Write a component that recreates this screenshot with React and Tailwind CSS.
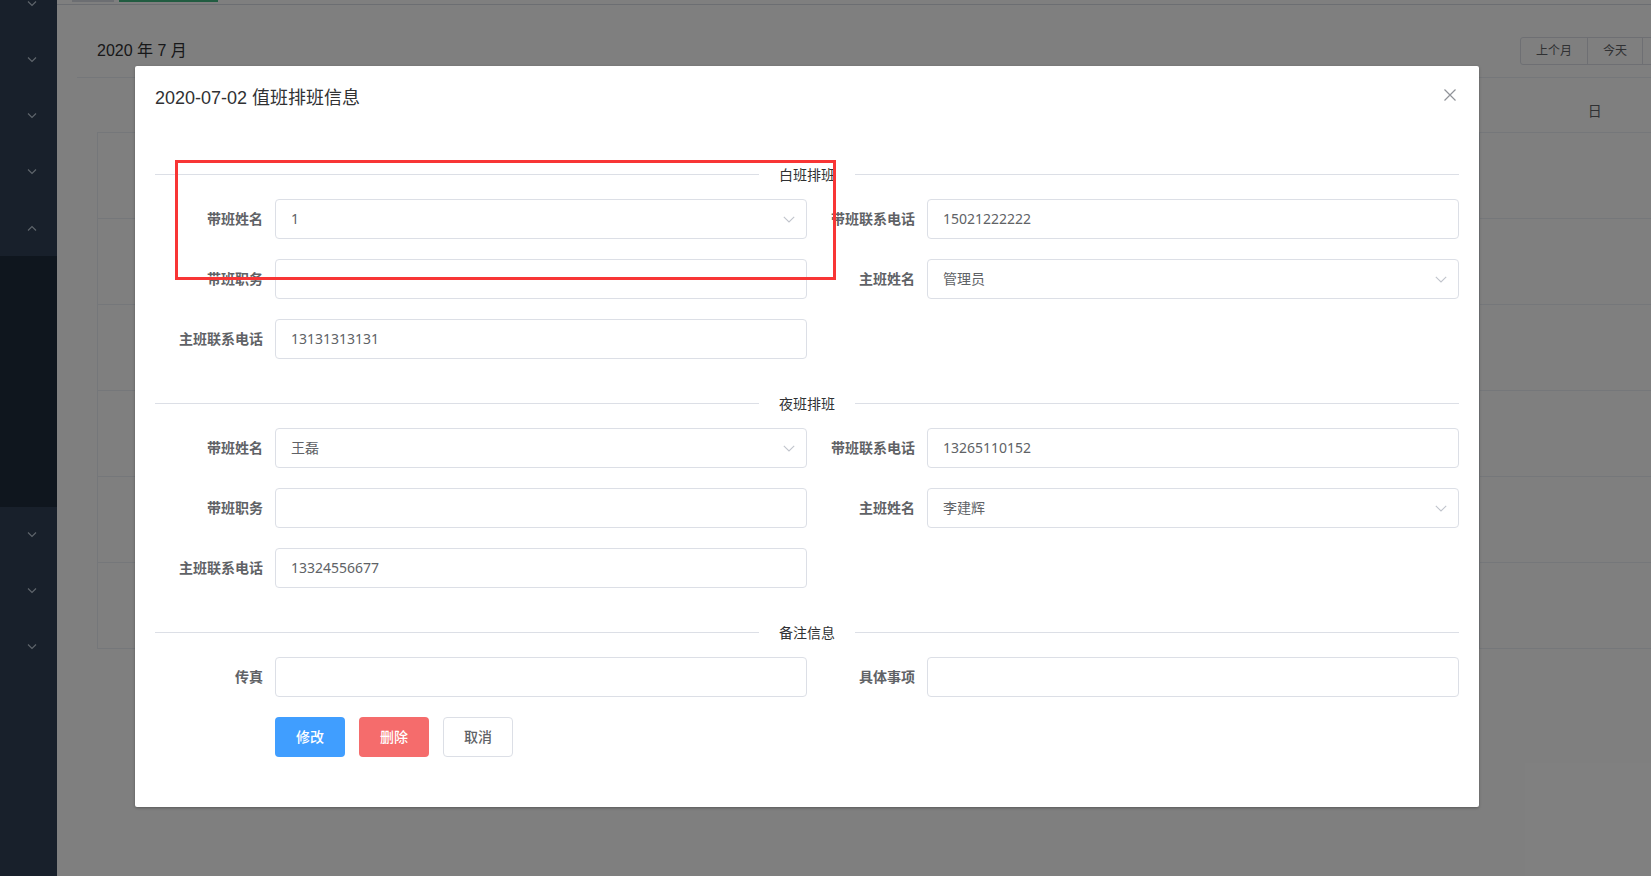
import React from "react";

const Chevron = ({ up = false, className = "" }) => (
  <svg width="10" height="6" viewBox="0 0 10 6" className={className} fill="none">
    <path
      d={up ? "M1 5.5 L5 1.5 L9 5.5" : "M1 0.5 L5 4.5 L9 0.5"}
      stroke="#bfcbd9"
      strokeWidth="1.1"
    />
  </svg>
);

const SelectArrow = () => (
  <svg width="12" height="7" viewBox="0 0 12 7" fill="none">
    <path d="M0.8 0.8 L6 6 L11.2 0.8" stroke="#c0c4cc" strokeWidth="1.1" />
  </svg>
);

const SideItem = ({ up }) => (
  <div className="h-[56px] shrink-0 flex items-center justify-center pl-[6px]">
    <Chevron up={up} />
  </div>
);

const Sidebar = () => (
  <div className="w-[57px] shrink-0 h-full bg-[#304156] overflow-hidden">
    <div className="-mt-[24px] flex flex-col">
      <SideItem />
      <SideItem />
      <SideItem />
      <SideItem />
      <SideItem up />
      <div className="h-[251px] bg-[#1f2d3d]" />
      <SideItem />
      <SideItem />
      <SideItem />
    </div>
  </div>
);

const Calendar = () => {
  const heads = ["", "", "", "", "", "", "日"];
  return (
    <div className="w-[1653px] shrink-0">
      <div className="flex items-center justify-between px-5 py-3 border-b border-[#ebeef5]">
        <div className="text-base text-[#303133] leading-7">2020 年 7 月</div>
        <div className="flex">
          <div className="h-[28px] px-[15px] flex items-center text-xs text-[#606266] border border-[#dcdfe6] rounded-l-[3px]">
            上个月
          </div>
          <div className="h-[28px] px-[15px] flex items-center text-xs text-[#606266] border border-[#dcdfe6] -ml-px">
            今天
          </div>
          <div className="h-[28px] w-[68px] border border-[#dcdfe6] -ml-px rounded-r-[3px]" />
        </div>
      </div>
      <div className="px-5 pt-3 pb-[35px]">
        <div className="grid grid-cols-7 h-[42px]">
          {heads.map((h, i) => (
            <div key={i} className="flex items-center justify-center text-sm text-[#606266]">
              {h}
            </div>
          ))}
        </div>
        <div className="grid grid-cols-7 border-l border-t border-[#ebeef5]">
          {Array.from({ length: 42 }).map((_, i) => (
            <div key={i} className="h-[86px] border-r border-b border-[#ebeef5]" />
          ))}
        </div>
      </div>
    </div>
  );
};

const Divider = ({ text }) => (
  <div className="flex items-center h-px my-6">
    <div className="flex-1 h-px bg-[#dcdfe6]" />
    <span className="px-5 text-sm font-normal text-[#303133] leading-none whitespace-nowrap">
      {text}
    </span>
    <div className="flex-1 h-px bg-[#dcdfe6]" />
  </div>
);

const Field = ({ label, value = "", select = false }) => (
  <div className="flex mb-5">
    <label className="w-[120px] shrink-0 pr-3 text-right text-sm font-bold text-[#606266] leading-[40px]">
      {label}
    </label>
    <div className="flex-1 h-10 border border-[#dcdfe6] rounded bg-white flex items-center">
      <span className="flex-1 pl-[15px] text-sm text-[#606266] font-['Noto_Sans','Noto_Sans_CJK_SC',sans-serif]">
        {value}
      </span>
      {select && (
        <span className="w-[25px] mr-[5px] flex items-center justify-center">
          <SelectArrow />
        </span>
      )}
    </div>
  </div>
);

const Dialog = () => (
  <div className="absolute left-[135px] top-[66px] w-[1344px] bg-white rounded-[2px] shadow-[0_1px_3px_rgba(0,0,0,0.3)]">
    <div className="relative px-5 pt-5 pb-[10px]">
      <div className="text-lg leading-6 text-[#303133]">2020-07-02 值班排班信息</div>
      <button className="absolute top-[23px] right-[23px] w-[12px] h-[12px] flex items-center justify-center">
        <svg width="12" height="12" viewBox="0 0 12 12" fill="none">
          <path d="M0.5 0.5 L11.5 11.5 M11.5 0.5 L0.5 11.5" stroke="#909399" strokeWidth="1.2" />
        </svg>
      </button>
    </div>
    <div className="px-5 pt-[30px] pb-[30px]">
      <Divider text="白班排班" />
      <div className="grid grid-cols-2">
        <Field label="带班姓名" value="1" select />
        <Field label="带班联系电话" value="15021222222" />
        <Field label="带班职务" />
        <Field label="主班姓名" value="管理员" select />
        <Field label="主班联系电话" value="13131313131" />
      </div>
      <Divider text="夜班排班" />
      <div className="grid grid-cols-2">
        <Field label="带班姓名" value="王磊" select />
        <Field label="带班联系电话" value="13265110152" />
        <Field label="带班职务" />
        <Field label="主班姓名" value="李建辉" select />
        <Field label="主班联系电话" value="13324556677" />
      </div>
      <Divider text="备注信息" />
      <div className="grid grid-cols-2">
        <Field label="传真" />
        <Field label="具体事项" />
      </div>
      <div className="flex gap-[14px] ml-[120px] mb-5">
        <button className="h-10 w-[70px] rounded bg-[#409eff] text-white text-sm font-medium">
          修改
        </button>
        <button className="h-10 w-[70px] rounded bg-[#f56c6c] text-white text-sm font-medium">
          删除
        </button>
        <button className="h-10 w-[70px] rounded bg-white border border-[#dcdfe6] text-[#606266] text-sm font-medium">
          取消
        </button>
      </div>
    </div>
  </div>
);

export default function App() {
  return (
    <div className="relative w-[1651px] h-[876px] overflow-hidden bg-white font-['Liberation_Sans','Noto_Sans_CJK_SC',sans-serif]">
      <div className="flex h-full">
        <Sidebar />
        <div className="flex-1 min-w-0 flex flex-col overflow-hidden">
          <div className="h-[5px] shrink-0 bg-white border-b border-[#d8dce5] relative flex items-start">
            <div className="ml-[15px] w-[42px] h-[2px] bg-[#d8dce5]" />
            <div className="ml-[5px] w-[99px] h-[2px] bg-[#42b983]" />
          </div>
          <div className="flex pl-5 pt-5">
            <Calendar />
          </div>
        </div>
      </div>
      <div className="absolute inset-0 bg-black/50" />
      <Dialog />
      <div className="absolute left-[175px] top-[160px] w-[661px] h-[120px] border-[3px] border-[#f83535]" />
    </div>
  );
}
